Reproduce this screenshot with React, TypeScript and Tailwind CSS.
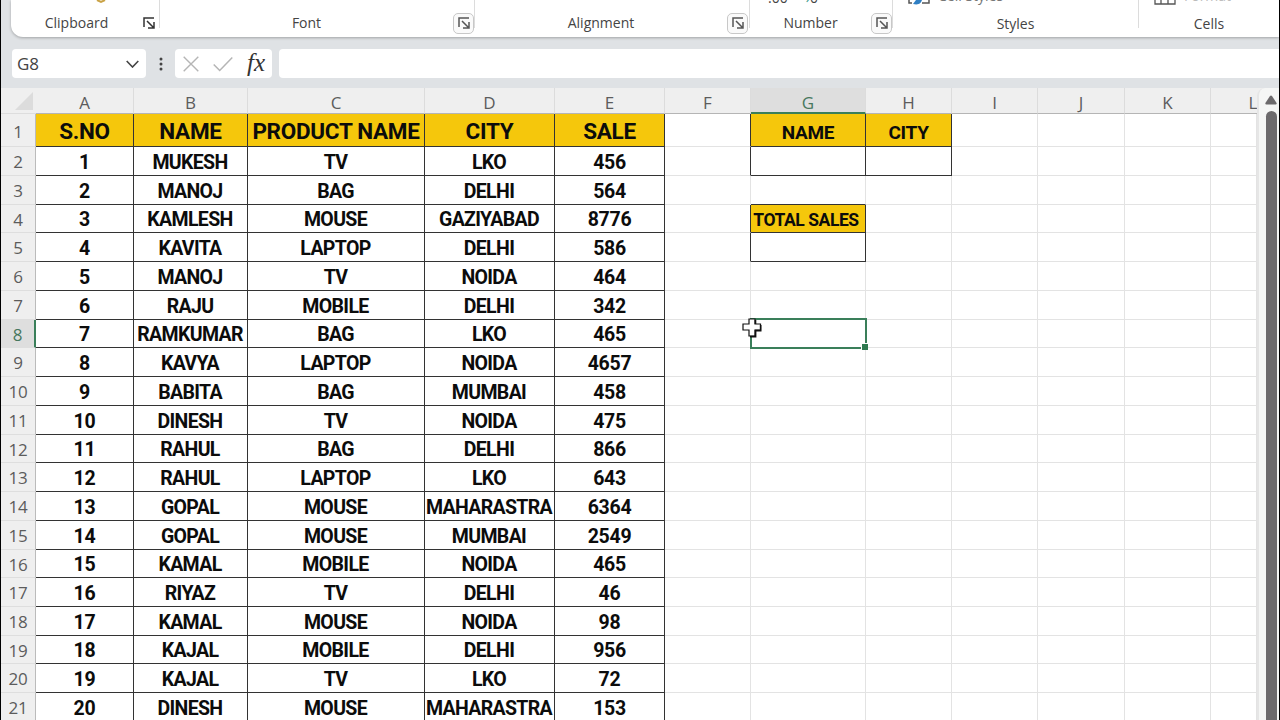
import { ReactNode } from 'react';

interface Column {
  name: string;
  width: number;
}

const COLUMNS: Column[] = [
  { name: 'A', width: 98 },
  { name: 'B', width: 114 },
  { name: 'C', width: 177 },
  { name: 'D', width: 130 },
  { name: 'E', width: 110 },
  { name: 'F', width: 86 },
  { name: 'G', width: 115 },
  { name: 'H', width: 86 },
  { name: 'I', width: 86 },
  { name: 'J', width: 87 },
  { name: 'K', width: 86 },
  { name: 'L', width: 46 },
];

const HEADERS = ['S.NO', 'NAME', 'PRODUCT NAME', 'CITY', 'SALE'];

const SALES: [string, string, string, number][] = [
  ['MUKESH', 'TV', 'LKO', 456],
  ['MANOJ', 'BAG', 'DELHI', 564],
  ['KAMLESH', 'MOUSE', 'GAZIYABAD', 8776],
  ['KAVITA', 'LAPTOP', 'DELHI', 586],
  ['MANOJ', 'TV', 'NOIDA', 464],
  ['RAJU', 'MOBILE', 'DELHI', 342],
  ['RAMKUMAR', 'BAG', 'LKO', 465],
  ['KAVYA', 'LAPTOP', 'NOIDA', 4657],
  ['BABITA', 'BAG', 'MUMBAI', 458],
  ['DINESH', 'TV', 'NOIDA', 475],
  ['RAHUL', 'BAG', 'DELHI', 866],
  ['RAHUL', 'LAPTOP', 'LKO', 643],
  ['GOPAL', 'MOUSE', 'MAHARASTRA', 6364],
  ['GOPAL', 'MOUSE', 'MUMBAI', 2549],
  ['KAMAL', 'MOBILE', 'NOIDA', 465],
  ['RIYAZ', 'TV', 'DELHI', 46],
  ['KAMAL', 'MOUSE', 'NOIDA', 98],
  ['KAJAL', 'MOBILE', 'DELHI', 956],
  ['KAJAL', 'TV', 'LKO', 72],
  ['DINESH', 'MOUSE', 'MAHARASTRA', 153],
];

// bottom grid line of every row, measured from the top of row 1
const rowBottom = (row: number) => (row === 0 ? 0 : Math.floor(32.8 + 28.73 * (row - 1)) + 1);

function cellText(row: number, col: number): string {
  if (row === 1) {
    if (col < 5) return HEADERS[col];
    if (col === 6) return 'NAME';
    if (col === 7) return 'CITY';
    return '';
  }
  if (col === 0) return String(row - 1);
  if (col < 5) return String(SALES[row - 2][col - 1]);
  if (row === 4 && col === 6) return 'TOTAL SALES';
  return '';
}

function cellClass(row: number, col: number): string {
  const inTable = col < 5;
  const inSearch = (col === 6 || col === 7) && row <= 2;
  const inTotal = col === 6 && (row === 4 || row === 5);
  const rightDark = inTable || inSearch || inTotal || (col === 5 && [1, 2, 4, 5].includes(row));
  const bottomDark = inTable || inSearch || inTotal || (col === 6 && row === 3);
  const filled = (row === 1 && (inTable || inSearch)) || (row === 4 && col === 6);
  let size = 'text-[19.5px] tracking-[-0.65px] pt-[2px] pr-px';
  if (col === 0 || col === 4) size = 'text-[19.5px] tracking-[-0.3px] pt-[2px]';
  if (row === 1) size = inTable ? 'text-[22.5px] tracking-[-0.3px] pt-0.5' : 'text-[19px] tracking-[-0.3px] pt-[3px]';
  if (row === 4 && col === 6) size = 'text-[17.5px] tracking-[-0.45px] pr-1 pt-1';
  return [
    'relative flex shrink-0 items-center justify-center whitespace-nowrap border-r border-b font-bold leading-none',
    rightDark ? 'border-r-[#333]' : 'border-r-[#e3e3e3]',
    bottomDark ? 'border-b-[#333]' : 'border-b-[#e3e3e3]',
    filled ? 'bg-[#f5c70c]' : 'bg-white',
    size,
  ].join(' ');
}

function LauncherIcon() {
  return (
    <svg width="12" height="12" viewBox="0 0 12 12" fill="none" stroke="currentColor" strokeWidth="1.5">
      <path d="M1 10V1h10M4 4l6.5 6.500M11 5v6H5" />
    </svg>
  );
}

function Launcher({ framed = true }: { framed?: boolean }) {
  return (
    <span
      className={
        framed
          ? 'flex size-[21px] items-center justify-center rounded-[5px] border border-[#c8c8c8] bg-[#fafafa] text-[#555]'
          : 'flex w-[13px] items-center justify-center text-[#333]'
      }
    >
      <LauncherIcon />
    </span>
  );
}

interface GroupProps {
  label: string;
  className: string;
  launcher?: ReactNode;
  children?: ReactNode;
}

function RibbonGroup({ label, className, launcher, children }: GroupProps) {
  return (
    <div className={`flex h-[37px] shrink-0 flex-col ${className}`}>
      <div className="h-3 overflow-hidden">{children}</div>
      <div className="flex h-[22px] items-center">
        <span className={`flex-1 text-center text-[14px] leading-none text-[#444] ${launcher ? '' : 'pt-0.5'}`}>{label}</span>
        {launcher}
      </div>
    </div>
  );
}

const Divider = () => <div className="h-7 w-px shrink-0 bg-[#dcdcdc]" />;

function Ribbon() {
  return (
    <div className="ml-2.5 flex h-[37px] shrink-0 overflow-hidden rounded-bl-xl bg-white shadow-[0_1px_3px_rgba(0,0,0,0.28)]">
      <RibbonGroup label="Clipboard" className="w-[148px] pr-1" launcher={<Launcher framed={false} />}>
        <svg width="148" height="12" viewBox="0 0 148 12">
          <path d="M86 0l4 2 4-2" fill="none" stroke="#c9a245" strokeWidth="2" />
        </svg>
      </RibbonGroup>
      <Divider />
      <RibbonGroup label="Font" className="w-[314px]" launcher={<Launcher />} />
      <Divider />
      <RibbonGroup label="Alignment" className="w-[274px] pr-px" launcher={<Launcher />} />
      <Divider />
      <RibbonGroup label="Number" className="w-[142px]" launcher={<Launcher />}>
        <div className="-mt-[9px] flex gap-[18px] pl-[18px] text-[14px] leading-none text-[#444]">
          <span>.00</span>
          <span>
            <span className="text-[#3a9c8c]">›</span>0
          </span>
        </div>
      </RibbonGroup>
      <Divider />
      <RibbonGroup label="Styles" className="w-[245px]">
        <div className="flex gap-2 pl-[15px]">
          <svg width="22" height="6" viewBox="0 0 22 6" fill="none">
            <path d="M1 0v3h3M21 0v3h-7" stroke="#555" strokeWidth="1.5" />
            <path d="M5 4c6 1.500 8-1 9-4H8z" fill="#2f7fc4" />
          </svg>
          <span className="-mt-[11px] text-[14px] leading-none text-[#777]">Cell Styles</span>
        </div>
      </RibbonGroup>
      <Divider />
      <RibbonGroup label="Cells" className="w-[140px]">
        <div className="flex gap-2 pl-[15px]">
          <svg width="22" height="6" viewBox="0 0 22 6" fill="none" stroke="#555" strokeWidth="1.3">
            <path d="M1 0v4h20V0M7 0v4M14 0v4" />
          </svg>
          <span className="-mt-[11px] text-[14px] leading-none text-[#bbb]">Format</span>
        </div>
      </RibbonGroup>
    </div>
  );
}

function FormulaBar() {
  return (
    <div className="flex h-[51px] shrink-0 items-start pt-3 pl-[11px]">
      <div className="flex h-[29px] w-[134px] items-center justify-between rounded-[4px] bg-white pr-[7px] pl-[5px]">
        <span className="text-[17px] leading-none text-[#444]">G8</span>
        <svg width="13" height="8" viewBox="0 0 13 8" fill="none" stroke="#444" strokeWidth="1.6">
          <path d="M.7 1l5.800 6 5.800-6" />
        </svg>
      </div>
      <div className="flex h-[29px] w-[29px] items-center justify-center">
        <svg width="4" height="14" viewBox="0 0 4 14" fill="#444">
          <circle cx="2" cy="2" r="1.5" />
          <circle cx="2" cy="7" r="1.5" />
          <circle cx="2" cy="12" r="1.5" />
        </svg>
      </div>
      <div className="flex h-[29px] w-[97px] items-center rounded-[4px] bg-white pl-2">
        <svg width="16" height="16" viewBox="0 0 16 16" fill="none" stroke="#b5b5b5" strokeWidth="1.4">
          <path d="M.7.7l14.600 14.600M15.300.7L.7 15.300" />
        </svg>
        <svg className="ml-3.5" width="20" height="16" viewBox="0 0 20 16" fill="none" stroke="#b5b5b5" strokeWidth="1.5">
          <path d="M.7 8.500l6 6L19.300 1.500" />
        </svg>
        <span className="ml-3.5 pb-0.5 font-['Liberation_Serif',serif] text-[25px] leading-none text-[#333] italic">fx</span>
      </div>
      <div className="ml-[7px] h-[29px] flex-1 rounded-l-[4px] bg-white" />
    </div>
  );
}

// the cell cursor and the selection frame lie over the selected cell
function Selection() {
  return (
    <>
      <span className="absolute -top-[2px] -right-[2px] -bottom-[2px] -left-px z-10 border-2 border-[#3a7f5a]" />
      <span className="absolute -right-[3px] -bottom-[3px] z-20 size-[7px] border-t border-l border-white bg-[#2f7a50]" />
      <svg className="absolute -top-[2px] -left-[9px] z-30" width="20" height="20" viewBox="0 0 20 20">
        <path d="M7 1h6v5h5.500v6H13v6H7v-6H1V6h6z" fill="#fff" stroke="#111" strokeWidth="1.2" />
        <path d="M13.500 2v4M18.700 7v5.600H13.600v6H8" fill="none" stroke="#111" strokeWidth="1.6" />
      </svg>
    </>
  );
}

function ColumnHeaders() {
  return (
    <div className="flex h-[26px] shrink-0">
      <div className="flex w-[35px] shrink-0 items-end justify-end border-b border-[#ddd] pr-[3px] pb-[3px]">
        <svg width="18" height="18" viewBox="0 0 18 18" fill="#dcdcdc">
          <path d="M18 0v18H0z" />
        </svg>
      </div>
      {COLUMNS.map((column, i) => {
        const selected = column.name === 'G';
        return (
          <div
            key={column.name}
            style={{ width: column.width }}
            className={`flex shrink-0 items-center justify-center overflow-hidden border-r border-r-[#dcdcdc] text-[17px] leading-none ${
              selected
                ? 'border-b-2 border-b-[#3a7f5a] bg-[#dedede] pt-[5px] text-[#47775d]'
                : 'border-b border-b-[#b5b5b5] pt-1 text-[#5c5c5c]'
            } ${i === 11 ? 'border-r-0 pl-[38px]' : ''}`}
          >
            {column.name}
          </div>
        );
      })}
    </div>
  );
}

function Row({ row }: { row: number }) {
  const selected = row === 8;
  return (
    <div className="flex shrink-0" style={{ height: rowBottom(row) - rowBottom(row - 1) }}>
      <div
        className={`flex w-[35px] shrink-0 items-center justify-center border-b border-b-[#dedede] text-[17px] leading-none tracking-[-0.3px] ${
          row === 1 ? 'pt-[3px]' : 'pt-px'
        } ${selected ? 'border-r-2 border-r-[#3a7f5a] bg-[#dedede] text-[#47775d]' : 'border-r border-r-[#bbb] text-[#5c5c5c]'}`}
      >
        {row}
      </div>
      {COLUMNS.map((column, col) => (
        <div key={column.name} style={{ width: column.width }} className={cellClass(row, col)}>
          <span className="pt-px">{cellText(row, col)}</span>
          {selected && column.name === 'G' && <Selection />}
        </div>
      ))}
    </div>
  );
}

function ScrollBar() {
  return (
    <div className="flex w-[22px] shrink-0 flex-col items-center rounded-tl-lg border-l-2 border-[#e6e6e6] bg-[#f5f6f5] pt-[7px] pl-1">
      <svg width="12" height="10" viewBox="0 0 12 10" fill="#6c6a6c">
        <path d="M5 1a1.300 1.300 0 012 0l4.600 7q.4 1.500-1 1.500H1.400Q0 9.500.4 8z" />
      </svg>
      <div className="mt-[6px] w-[11px] flex-1 rounded-t-full bg-[#6c6a6c]" />
    </div>
  );
}

export default function App() {
  const rows = Array.from({ length: 21 }, (_, i) => i + 1);
  return (
    <div className="flex h-[720px] w-[1280px] flex-col overflow-hidden border-x border-black bg-[#dfe2e5] font-['Open_Sans','Noto_Sans',sans-serif]">
      <Ribbon />
      <FormulaBar />
      <div className="flex min-h-0 flex-1 bg-[#efefef]">
        <div className="flex w-[1256px] shrink-0 flex-col overflow-hidden">
          <ColumnHeaders />
          <div className="flex flex-col text-[#0c0c0c] [&_.font-bold]:font-['Roboto',sans-serif]">
            {rows.map((row) => (
              <Row key={row} row={row} />
            ))}
          </div>
        </div>
        <ScrollBar />
      </div>
    </div>
  );
}
